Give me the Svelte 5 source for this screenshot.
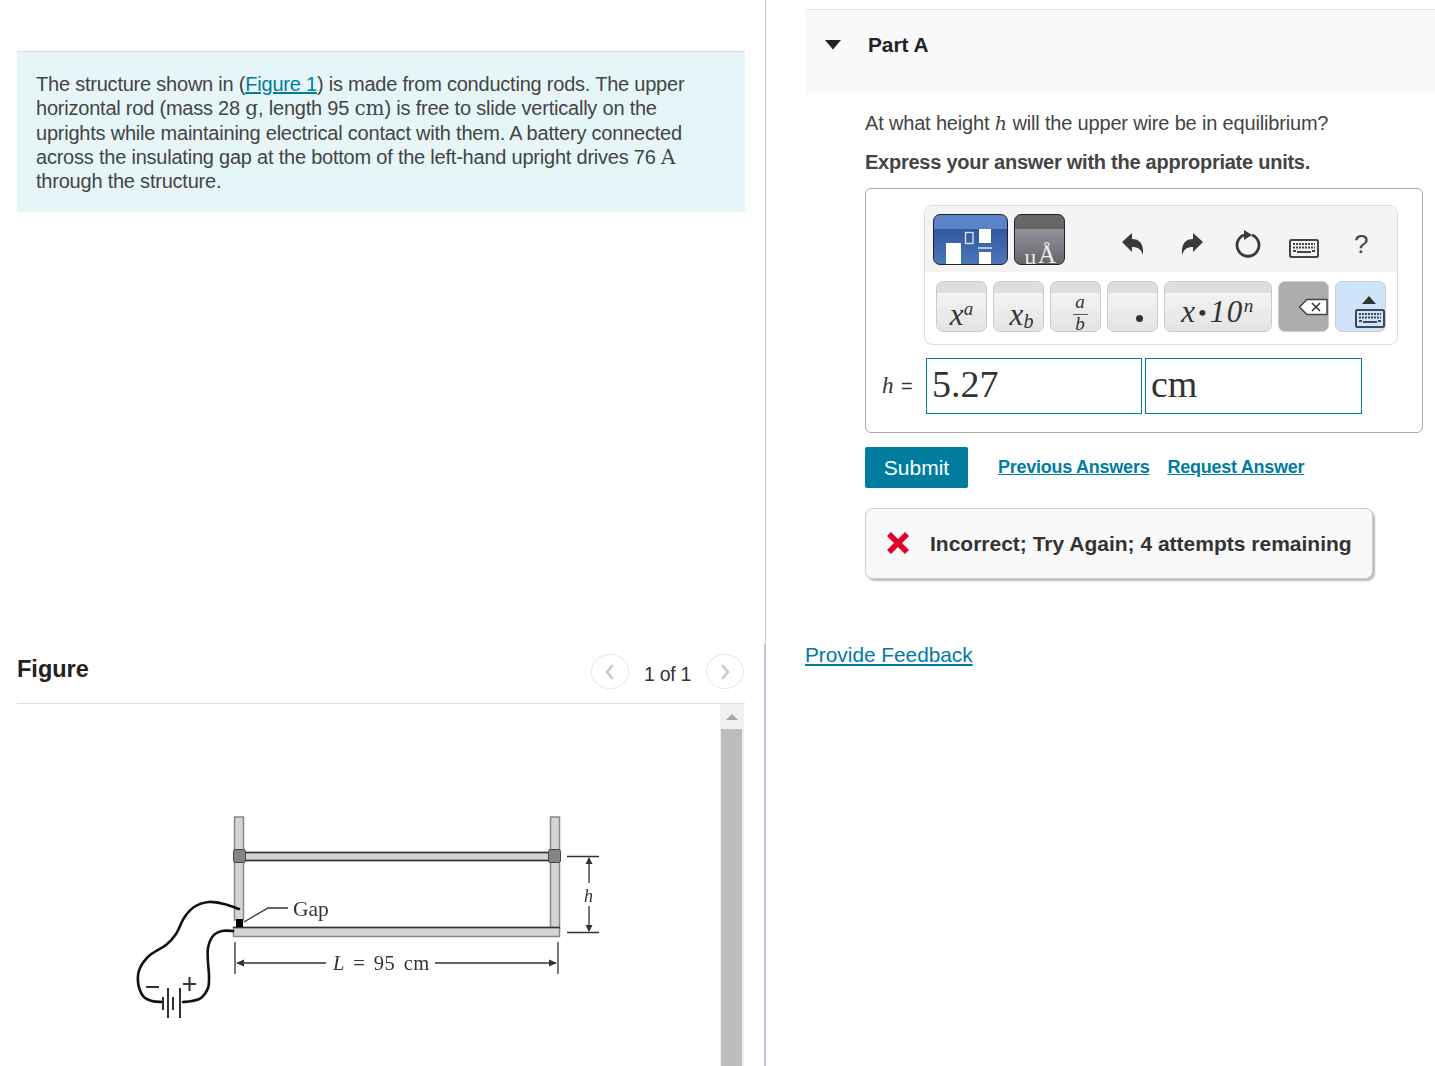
<script>
  const smooth = (p) => {
    let d = `M${p[0][0]} ${p[0][1]}`;
    for (let i = 0; i < p.length - 1; i++) {
      const a = p[Math.max(i - 1, 0)], b = p[i], c = p[i + 1], e = p[Math.min(i + 2, p.length - 1)];
      d += `C${b[0] + (c[0] - a[0]) / 6} ${b[1] + (c[1] - a[1]) / 6} ${c[0] - (e[0] - b[0]) / 6} ${c[1] - (e[1] - b[1]) / 6} ${c[0]} ${c[1]}`;
    }
    return d;
  };
  const wire1 = smooth([[239,909],[224,904],[209,902],[194,907],[184,918],[176,934],[166,945],[150,955],[140,968],[138,982],[143,996],[152,1001],[162,1002]]);
  const wire2 = smooth([[233,931],[222,931],[213,936],[208,948],[208,962],[209,976],[208,988],[201,998],[192,1001],[183,1002]]);
</script>

{#snippet kbd(color)}
  <svg class="kbd" width="30" height="19" viewBox="0 0 30 19">
    <rect x="1" y="1" width="28" height="17" rx="1.5" fill="none" stroke={color} stroke-width="2"/>
    <path d="M4 5h22M4 8.500h22" stroke={color} stroke-width="2" stroke-dasharray="2 1"/>
    <path d="M4 12h3M8 13h14M23 12h3" stroke={color} stroke-width="2"/>
  </svg>
{/snippet}

<div class="page">
  <section class="left">
    <div class="intro">
      <p>The structure shown in (<a href="#f">Figure 1</a>) is made from conducting rods. The upper horizontal rod (mass 28 <span class="m">g</span>, length 95 <span class="m">cm</span>) is free to slide vertically on the uprights while maintaining electrical contact with them. A battery connected across the insulating gap at the bottom of the left-hand upright drives 76 <span class="m">A</span> through the structure.</p>
    </div>
    <header class="fighead">
      <h2>Figure</h2>
      <div class="pager">
        <span class="circ"><svg width="14" height="18" viewBox="0 0 14 18"><path d="M10 2L4 9l6 7" fill="none" stroke="#c9c9c9" stroke-width="2.500"/></svg></span>
        <span class="count">1 of 1</span>
        <span class="circ"><svg width="14" height="18" viewBox="0 0 14 18"><path d="M4 2l6 7-6 7" fill="none" stroke="#c9c9c9" stroke-width="2.500"/></svg></span>
      </div>
    </header>
    <div class="figbody">
      <svg class="figure" width="703" height="362" viewBox="17 704 703 362">
        <g fill="#d4d4d4" stroke="#888" stroke-width="1.500">
          <rect x="234.500" y="817" width="9" height="103"/>
          <rect x="550.500" y="817" width="9" height="112"/>
          <rect x="245" y="852.500" width="304" height="8"/>
          <rect x="233.500" y="927.500" width="326" height="9"/>
        </g>
        <path d="M245 852.500h304M245 860.500h304M233 927.500h327" stroke="#333" stroke-width="1.500"/>
        <g fill="#858585" stroke="#444" stroke-width="1">
          <rect x="233.500" y="849.500" width="12" height="13" rx="2"/>
          <rect x="548.500" y="849.500" width="12" height="13" rx="2"/>
        </g>
        <rect x="236" y="919" width="7" height="8" fill="#000"/>
        <g fill="none" stroke="#111" stroke-width="2.600" stroke-linecap="round">
          <path d={wire1}/>
          <path d={wire2}/>
        </g>
        <g fill="none" stroke="#333" stroke-width="1.300">
          <path d="M244 922L268 908H288"/>
          <path d="M235 942V974M558 942V974M237 963H326M435 963H556"/>
          <path d="M567 856.500H599M567 932.500H599M589 858V883M589 906V931"/>
          <path d="M163 997V1010M168 988V1018M173 997V1010M180 988V1018" stroke-width="2"/>
          <path d="M146 987H159M183 984H196M189.500 977V991" stroke-width="2"/>
        </g>
        <g fill="#333">
          <path d="M236 963l8-3.500v7zM557 963l-8-3.500v7zM589 857l-3.500 7h7zM589 932l-3.500-7h7z"/>
        </g>
        <text x="293" y="916" class="ft">Gap</text>
        <text x="333" y="970" class="ft l"><tspan font-style="italic">L</tspan> = 95 cm</text>
        <text x="584" y="902" class="ft h">h</text>
      </svg>
      <div class="scrollbar">
        <svg width="12" height="8" viewBox="0 0 12 8"><path d="M0 7L6 1l6 6z" fill="#a6a6a6"/></svg>
        <div class="thumb"></div>
      </div>
    </div>
  </section>

  <section class="right">
    <div class="parthead">
      <svg width="16" height="10" viewBox="0 0 16 10"><path d="M0 0h16L8 9.500z" fill="#222"/></svg>
      <h3>Part A</h3>
    </div>
    <div class="content">
      <p class="q">At what height <span class="m">h</span> will the upper wire be in equilibrium?</p>
      <p class="hint">Express your answer with the appropriate units.</p>
      <div class="answer">
        <div class="toolbox">
          <div class="toprow">
            <div class="tab tab1">
              <svg width="73" height="49" viewBox="0 0 73 49">
                <path d="M12 28h15v22H12zM45 14h12v14H45zM45 37h12v13H45z" fill="#fff"/>
                <path d="M44 33h14" stroke="#dfe6f2" stroke-width="1.500"/>
                <rect x="31.500" y="17.500" width="7.500" height="11" fill="none" stroke="#dfe6f2" stroke-width="1.300"/>
              </svg>
            </div>
            <div class="tab tab2"><span class="mu">µ</span><span class="ang">Å</span></div>
            <div class="tools">
              <svg width="24" height="26" viewBox="0 0 24 26"><path d="M1 11L11 2v6c7 0 12 4 11 16-2-6-5-8-11-8v5z" fill="#3a3a3a"/></svg>
              <svg width="24" height="26" viewBox="0 0 24 26"><path d="M23 11L13 2v6C6 8 1 12 2 24c2-6 5-8 11-8v5z" fill="#3a3a3a"/></svg>
              <svg width="28" height="30" viewBox="0 0 28 30"><path d="M10 6a11 11 0 1 0 8 0" fill="none" stroke="#3a3a3a" stroke-width="2.800"/><path d="M10 1l8 5-8 5z" fill="#3a3a3a"/></svg>
              {@render kbd('#444')}
              <span class="help">?</span>
            </div>
          </div>
          <div class="keys">
            <div class="key"><span class="k xa"><i>x</i><sup>a</sup></span></div>
            <div class="key"><span class="k xb"><i>x</i><sub>b</sub></span></div>
            <div class="key"><span class="frac"><i>a</i><i class="den">b</i></span></div>
            <div class="key"><span class="dot"></span></div>
            <div class="key wide"><span class="k sci"><i>x</i><b>•</b><i>10</i><sup>n</sup></span></div>
            <div class="key back">
              <svg width="30" height="18" viewBox="0 0 30 18"><path d="M29 1.500H9L1.500 9 9 16.500h20z" fill="#fff" stroke="#444" stroke-width="1.500"/><path d="M14 5l8 8M22 5l-8 8" stroke="#333" stroke-width="1.500"/></svg>
            </div>
            <div class="key kb">
              <svg width="14" height="8" viewBox="0 0 14 8"><path d="M0 8L7 0l7 8z" fill="#333"/></svg>
              {@render kbd('#3c4858')}
            </div>
          </div>
        </div>
        <div class="inputrow">
          <span class="lbl"><span class="m">h</span> =</span>
          <div class="field">5.27</div>
          <div class="field">cm</div>
        </div>
      </div>
      <div class="actions">
        <button>Submit</button>
        <a href="#p">Previous Answers</a>
        <a href="#r">Request Answer</a>
      </div>
      <div class="result">
        <svg width="22" height="22" viewBox="0 0 22 22"><path d="M0 4l4-4 7 7 7-7 4 4-7 7 7 7-4 4-7-7-7 7-4-4 7-7z" fill="#e2002b"/></svg>
        <span>Incorrect; Try Again; 4 attempts remaining</span>
      </div>
    </div>
    <a class="feedback" href="#x">Provide Feedback</a>
  </section>
  <div class="divider"></div>
</div>

<style>
  :global(body) { margin: 0; background: #fff; }
  .page { display: flex; position: relative; width: 1435px; height: 1066px; overflow: hidden; font-family: "Liberation Sans", Arial, sans-serif; color: #333; }
  .left { border-right: 1px solid #ccc; flex: none; padding: 51px 20px 0 17px; box-sizing: content-box; width: 728px; }
  .intro { background: #e6f6f8; border-top: 1px solid #dcdcdc; height: 161px; box-sizing: border-box; padding: 20px 60px 0 19px; }
  .intro p { margin: 0; font-size: 20px; line-height: 24.300px; letter-spacing: -0.220px; color: #444; }
  .intro a { color: #007c9f; text-decoration: underline; }
  .m { font-family: "Liberation Serif", serif; }
  .intro .m { font-family: "DejaVu Serif", serif; font-size: 20px; line-height: 1; letter-spacing: 0; }
  .fighead { display: flex; justify-content: space-between; align-items: flex-start; height: 59px; margin-top: 432px; border-bottom: 1px solid #ddd; box-sizing: content-box; }
  h2 { margin: 10px 0 0; font-size: 23.500px; line-height: 30px; font-weight: bold; color: #222; }
  .pager { display: flex; align-items: flex-start; gap: 15px; margin: 10px 1px 0 0; }
  .circ { width: 36px; height: 33px; border: 1px solid #e8e8e8; border-radius: 50%; display: flex; align-items: center; justify-content: center; }
  .count { font-size: 19.500px; margin-top: 8px; line-height: 24px; letter-spacing: -0.300px; }
  .figbody { display: flex; height: 362px; }
  .figure { display: block; flex: none; filter: blur(0.4px); }
  .ft { font-family: "Liberation Serif", serif; font-size: 21.500px; fill: #333; stroke: none; }
  .ft.l { font-size: 20.500px; word-spacing: 2.800px; letter-spacing: 0.500px; }
  .ft.h { font-size: 18px; font-style: italic; }
  .scrollbar { width: 24px; background: #f0f0f0; flex: none; display: flex; flex-direction: column; align-items: flex-start; }
  .scrollbar svg { margin: 9px 0 0 6px; height: 8px; }
  .thumb { width: 21px; height: 340px; margin: 8px 0 0 1px; background: #bdbdbd; }
  .right { flex: none; width: 630px; margin-left: 39px; padding-top: 9px; }
  .parthead { background: #f9f9f9; border-top: 1px solid #e4e4e4; display: flex; align-items: center; padding: 0 0 16px 20px; box-sizing: content-box; height: 69px; }
  h3 { margin: 0 0 0 27px; font-size: 20.800px; font-weight: bold; color: #222; }
  .content { padding-left: 60px; }
  .q { margin: 16px 0 0; font-size: 20px; line-height: 24px; letter-spacing: -0.170px; color: #444; }
  .q .m { font-family: "DejaVu Serif", serif; font-style: italic; font-size: 19px; line-height: 1; letter-spacing: 0; }
  .hint { margin: 15px 0 0; font-size: 20px; line-height: 24px; font-weight: bold; letter-spacing: -0.250px; color: #444; }
  .answer { margin-top: 14px; width: 558px; height: 245px; box-sizing: border-box; border: 1px solid #aaa; border-radius: 6px; padding: 16px 0 0 58px; }
  .toolbox { width: 474px; height: 140px; box-sizing: border-box; border: 1px solid #ddd; border-radius: 8px; overflow: hidden; }
  .toprow { height: 66px; background: #f4f4f4; display: flex; padding: 8px 0 0 8px; box-sizing: border-box; gap: 6px; }
  .tab { height: 51px; box-sizing: border-box; border: 1px solid #222; border-radius: 7px; overflow: hidden; position: relative; }
  .tab1 { width: 75px; background: linear-gradient(#5b84c6 0 14px, #30599d 14px, #4c77ba 100%); }
  .tab1 svg { display: block; }
  .tab2 { width: 51px; background: linear-gradient(#676767 0 14px, #94929b 14px, #67656b 100%); color: #eee; font-family: "Liberation Serif", serif; }
  .mu { position: absolute; left: 9px; top: 30px; font-size: 22px; line-height: 24px; }
  .ang { position: absolute; left: 23px; top: 26px; font-size: 25px; line-height: 28px; }
  .tools { flex: none; display: flex; align-items: center; margin: 0 0 0 50px; height: 60px; }
  .tools svg:nth-child(1) { margin-right: 35px; }
  .tools svg:nth-child(2) { margin-right: 30px; }
  .tools svg:nth-child(3) { margin-right: 27px; }
  .kbd { display: block; margin-top: 9px; }
  .help { margin-left: 35px; font-size: 26px; color: #444; }
  .keys { display: flex; gap: 6px; padding: 9px 0 0 11px; background: #fff; }
  .key { width: 51px; height: 51px; box-sizing: border-box; border: 1px solid #ccc; border-radius: 7px; background: linear-gradient(#dedede 0 11px, #f3f3f3 11px, #e3e3e3 100%); position: relative; display: flex; align-items: flex-end; justify-content: center; font-family: "Liberation Serif", serif; color: #333; }
  .wide { width: 108px; }
  .k { font-size: 31px; line-height: 1; padding-bottom: 1px; white-space: nowrap; }
  .k sup { font-size: 19px; font-style: italic; vertical-align: 10px; line-height: 0; }
  .k sub { font-size: 20px; font-style: italic; vertical-align: -3px; line-height: 0; }
  .xb { padding-left: 6px; }
  .sci { letter-spacing: 1.500px; padding-bottom: 4px; }
  .sci b { font-size: 22px; margin: 0 2px; vertical-align: 2px; }
  .frac { display: flex; flex-direction: column; align-items: center; font-size: 19px; line-height: 18px; margin: 0 0 -2px 9px; }
  .frac .den { border-top: 1.500px solid #555; width: 15px; text-align: center; margin-top: 3px; }
  .dot { width: 7px; height: 7px; border-radius: 50%; background: #333; margin: 0 0 9px 14px; }
  .back { background: #adadad; justify-content: flex-end; align-items: flex-start; padding-top: 16px; }
  .kb { background: #cfe4fb; flex-direction: column; align-items: flex-end; justify-content: flex-start; padding: 14px 0 0 0; }
  .kb svg:first-child { margin-right: 9px; }
  .kb .kbd { margin: 5px 0 0; }
  .inputrow { display: flex; align-items: center; margin-top: 13px; height: 56px; margin-left: -42px; }
  .lbl { width: 44px; font-size: 20px; font-family: "Liberation Sans", sans-serif; }
  .lbl .m { font-style: italic; font-size: 23px; margin-right: 2px; }
  .field { box-sizing: border-box; width: 216px; height: 56px; border: 1px solid #007c9f; font-family: "Liberation Serif", serif; font-size: 38px; line-height: 50px; padding-left: 5px; margin-right: 3px; color: #333; }
  .field + .field { width: 217px; }
  .actions { display: flex; align-items: center; margin-top: 14px; }
  button { width: 103px; height: 41px; background: #007c9f; color: #fff; border: 0; border-radius: 2px; font: 21px "Liberation Sans", sans-serif; padding: 0; }
  .actions a { font-size: 18px; font-weight: bold; color: #007c9f; text-decoration: underline; margin: 0 0 0 30px; letter-spacing: -0.250px; }
  .actions a + a { margin-left: 18px; }
  .result { margin-top: 20px; width: 508px; height: 71px; box-sizing: border-box; border: 1px solid #ccc; border-radius: 8px; background: #f9f9f9; box-shadow: 2px 2px 2px #bbb; display: flex; align-items: center; padding-left: 21px; gap: 21px; }
  .result svg { margin-top: -2px; }
  .result span { font-size: 21px; font-weight: bold; color: #333; }
  .feedback { display: block; margin-top: 64px; font-size: 20.800px; color: #007c9f; text-decoration: underline; line-height: 24px; }
  .divider { position: absolute; left: 764px; top: 644px; bottom: 0; width: 2px; background: #bccbdc; }
</style>
